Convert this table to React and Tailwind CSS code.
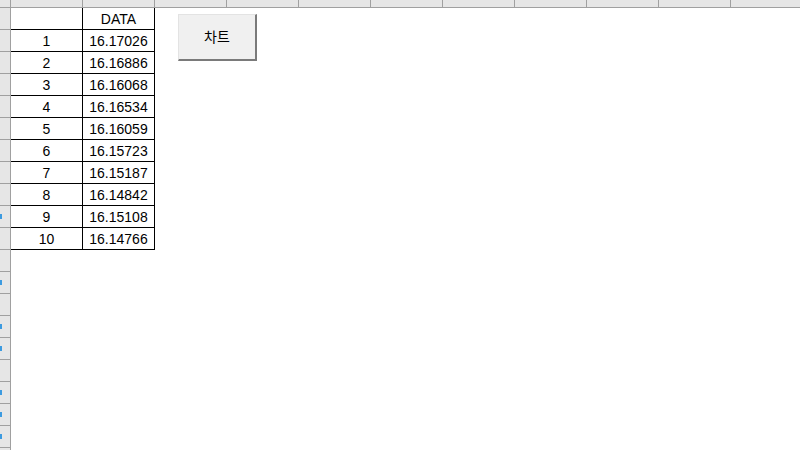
import React from "react";

const rows = [
  ["1", "16.17026"],
  ["2", "16.16886"],
  ["3", "16.16068"],
  ["4", "16.16534"],
  ["5", "16.16059"],
  ["6", "16.15723"],
  ["7", "16.15187"],
  ["8", "16.14842"],
  ["9", "16.15108"],
  ["10", "16.14766"],
];

const marks = { 9: true, 12: true, 14: true, 15: true, 17: true, 18: true, 19: true };

export default function App() {
  return (
    <div
      className="w-[800px] h-[450px] bg-white overflow-hidden flex flex-col text-black"
      style={{ fontFamily: '"Liberation Sans", Arial, "Noto Sans CJK KR", sans-serif' }}
    >
      {/* column header strip */}
      <div className="flex h-[8px] shrink-0 border-b border-[#a0a0a0] bg-[#e6e6e6]">
        <div className="w-[11px] shrink-0 border-r border-[#a0a0a0]" />
        {Array.from({ length: 11 }).map((_, i) => (
          <div key={i} className="w-[72px] shrink-0 border-r border-[#a0a0a0]" />
        ))}
      </div>

      <div className="flex flex-1 min-h-0">
        {/* row header strip */}
        <div className="w-[11px] shrink-0 border-r border-[#a0a0a0] bg-[#e6e6e6] flex flex-col">
          {Array.from({ length: 20 }).map((_, i) => (
            <div key={i} className="h-[22px] shrink-0 border-b border-[#a0a0a0] flex items-center">
              {marks[i] ? <div className="w-[2px] h-[5px] bg-[#3d9be0]" /> : null}
            </div>
          ))}
        </div>

        {/* table */}
        <div className="flex flex-col shrink-0 text-[14px] leading-none">
          <div className="flex h-[22px]">
            <div className="w-[72px] border-r border-b border-black" />
            <div className="w-[72px] border-r border-b border-black flex items-center justify-center">
              DATA
            </div>
          </div>
          {rows.map(([n, v]) => (
            <div key={n} className="flex h-[22px]">
              <div className="w-[72px] border-r border-b border-black flex items-center justify-center">
                {n}
              </div>
              <div className="w-[72px] border-r border-b border-black flex items-center justify-center">
                {v}
              </div>
            </div>
          ))}
        </div>

        {/* button */}
        <div className="ml-[23px] mt-[6px]">
          <div className="w-[79px] h-[47px] bg-[#f0f0f0] border-t border-l border-[#e3e3e3] border-r-2 border-b-2 border-r-[#7a7a7a] border-b-[#7a7a7a] flex items-center justify-center text-[14px]">
            차트
          </div>
        </div>
      </div>
    </div>
  );
}
